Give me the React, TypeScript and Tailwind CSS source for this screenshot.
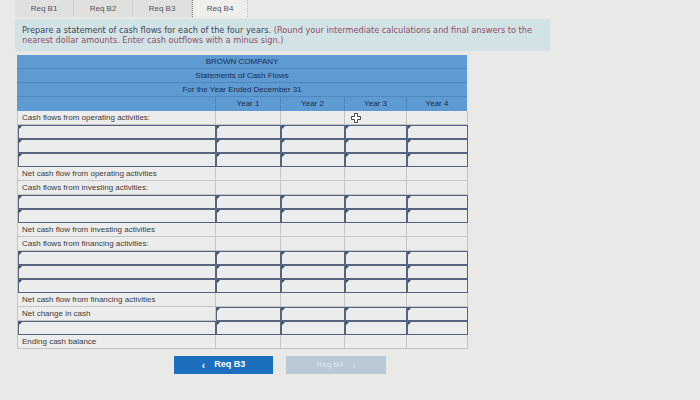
import React from 'react';

type RowKind = 'label' | 'input' | 'labelInput';

const rows: { kind: RowKind; text?: string }[] = [
  { kind: 'label', text: 'Cash flows from operating activities:' },
  { kind: 'input' },
  { kind: 'input' },
  { kind: 'input' },
  { kind: 'label', text: 'Net cash flow from operating activities' },
  { kind: 'label', text: 'Cash flows from investing activities:' },
  { kind: 'input' },
  { kind: 'input' },
  { kind: 'label', text: 'Net cash flow from investing activities' },
  { kind: 'label', text: 'Cash flows from financing activities:' },
  { kind: 'input' },
  { kind: 'input' },
  { kind: 'input' },
  { kind: 'label', text: 'Net cash flow from financing activities' },
  { kind: 'labelInput', text: 'Net change in cash' },
  { kind: 'input' },
  { kind: 'label', text: 'Ending cash balance' },
];

const tabs = ['Req B1', 'Req B2', 'Req B3', 'Req B4'];

const InputCell = () => (
  <div className="relative h-full border-[1.5px] border-[#56647f] bg-[#ececec]">
    <span className="absolute left-0 top-0 h-0 w-0 border-r-[3px] border-t-[3px] border-r-transparent border-t-[#34466c]" />
  </div>
);

const PlainCell = ({ children }: { children?: React.ReactNode }) => (
  <div className="flex h-full items-center border-b border-r border-[#c4c4c4] bg-[#ececec] pl-[4px] text-[8px] text-[#3b3b3b]">
    {children}
  </div>
);

const CursorIcon = () => (
  <svg width="10" height="10" viewBox="0 0 10 10" className="absolute left-[6px] top-[2px]">
    <path
      d="M3.5 0.5h3v3h3v3h-3v3h-3v-3h-3v-3h3z"
      fill="#ffffff"
      stroke="#333"
      strokeWidth="0.9"
    />
  </svg>
);

export default function App() {
  return (
    <div
      className="h-[400px] w-[700px] overflow-hidden bg-[#e9e9e7]"
      style={{ fontFamily: '"Liberation Sans", Arial, sans-serif' }}
    >
      {/* вкладки */}
      <div className="flex h-[17px] pl-[15px]">
        {tabs.map((t, i) => (
          <div
            key={t}
            className={
              i === 3
                ? 'flex w-[56px] items-center justify-center border-l border-dotted border-l-[#777] border-r border-r-[#bbb] bg-[#eeeeec] text-[8px] text-[#555]'
                : 'flex w-[59px] items-center justify-center border-r border-[#cfcfcf] bg-[#e0e0df] text-[8px] text-[#555]'
            }
          >
            {t}
          </div>
        ))}
      </div>

      {/* инструкция */}
      <div
        className="ml-[15px] mt-[2px] h-[32px] w-[535px] bg-[#d3e2e4] px-[7px] pt-[6px] text-[8.2px] leading-[10px] text-[#3c4a5c]"
        style={{ fontFamily: '"DejaVu Sans", Verdana, sans-serif' }}
      >
        Prepare a statement of cash flows for each of the four years.{' '}
        <span className="text-[#8a5068]">
          (Round your intermediate calculations and final answers to the nearest dollar amounts. Enter cash outflows
          with a minus sign.)
        </span>
      </div>

      {/* таблица */}
      <div className="ml-[17px] mt-[4px] w-[450px]">
        <div className="bg-[#5e9bd3] text-[8px] text-[#1c2b4a]">
          <div className="flex h-[14px] items-center justify-center border-b border-[#4c87bf]">BROWN COMPANY</div>
          <div className="flex h-[14px] items-center justify-center border-b border-[#4c87bf]">Statements of Cash Flows</div>
          <div className="flex h-[14px] items-center justify-center border-b border-[#4c87bf]">For the Year Ended December 31</div>
          <div className="grid h-[14px] grid-cols-[198px_65px_64px_62px_61px]">
            <div />
            {['Year 1', 'Year 2', 'Year 3', 'Year 4'].map((y) => (
              <div key={y} className="flex items-center justify-center border-l border-[#4c87bf]">
                {y}
              </div>
            ))}
          </div>
        </div>

        <div className="border-l border-[#c4c4c4]">
          {rows.map((r, i) => (
            <div key={i} className="grid h-[14px] grid-cols-[198px_65px_64px_62px_61px]">
              {r.kind === 'input' ? <InputCell /> : <PlainCell>{r.text}</PlainCell>}
              {[0, 1, 2, 3].map((c) =>
                r.kind === 'label' ? (
                  <div key={c} className="relative">
                    <PlainCell />
                    {i === 0 && c === 2 && <CursorIcon />}
                  </div>
                ) : (
                  <InputCell key={c} />
                )
              )}
            </div>
          ))}
        </div>
      </div>

      {/* кнопки */}
      <div className="mt-[7px] flex gap-[13px] pl-[174px]">
        <button className="flex h-[18px] w-[99px] items-center justify-center gap-[9px] bg-[#1c6fbf] text-[9px] font-bold text-white">
          <span className="text-[10px]">‹</span>
          <span>Req B3</span>
        </button>
        <button className="flex h-[18px] w-[100px] items-center justify-center gap-[9px] bg-[#b8c9d5] text-[8px] text-[#dfe7ee]">
          <span>Req B4</span>
          <span className="text-[10px]">›</span>
        </button>
      </div>
    </div>
  );
}
